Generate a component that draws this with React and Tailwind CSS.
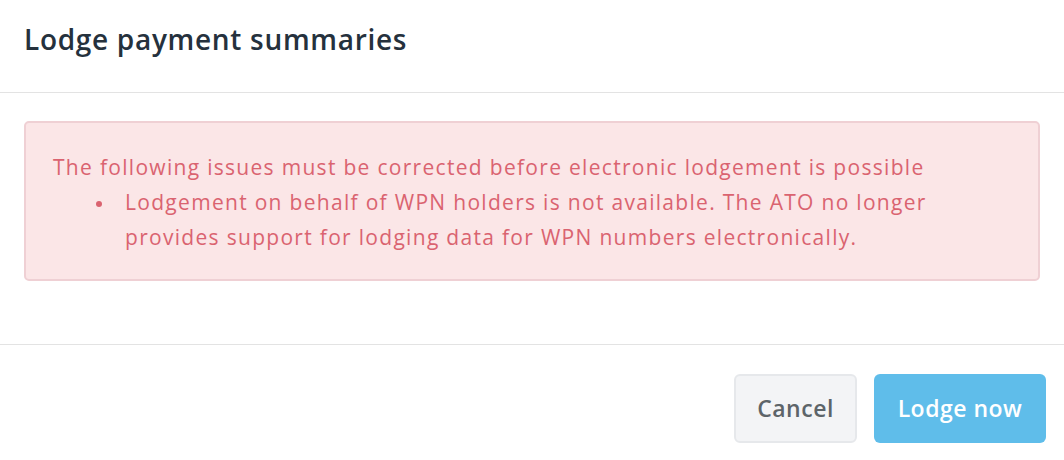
export default function App() {
  return (
    <div className="w-[1064px] h-[460px] bg-white overflow-hidden" style={{ fontFamily: '"Open Sans", Lato, sans-serif' }}>
      <div className="h-[93px] border-b border-[#e3e3e3] flex items-center px-6">
        <h1 className="text-[28px] font-semibold text-[#25313d] tracking-[0.7px] -mt-[14px]">Lodge payment summaries</h1>
      </div>
      <div className="h-[252px] border-b border-[#e3e3e3] px-6 pt-[28px]">
        <div className="h-[160px] rounded-[5px] border-2 border-[#efd0d4] bg-[#fbe6e7] pl-[27px] pr-6 pt-[27px] text-[21px] leading-[35px] tracking-[1.3px] text-[#da6370]">
          <p>The following issues must be corrected before electronic lodgement is possible</p>
          <ul className="list-disc pl-[62px] marker:text-[18px]">
            <li className="pl-[10px]">Lodgement on behalf of WPN holders is not available. The ATO no longer provides support for lodging data for WPN numbers electronically.</li>
          </ul>
        </div>
      </div>
      <div className="flex justify-end gap-[17px] px-[18px] pt-[29px]">
        <button className="w-[123px] h-[69px] rounded-[6px] border-2 border-[#e6e8eb] bg-[#f3f4f6] text-[23px] font-semibold tracking-[0.5px] text-[#5d6469]">Cancel</button>
        <button className="w-[172px] h-[69px] rounded-[6px] bg-[#5fbdea] text-[23px] font-semibold tracking-[0.5px] text-white">Lodge now</button>
      </div>
    </div>
  );
}
